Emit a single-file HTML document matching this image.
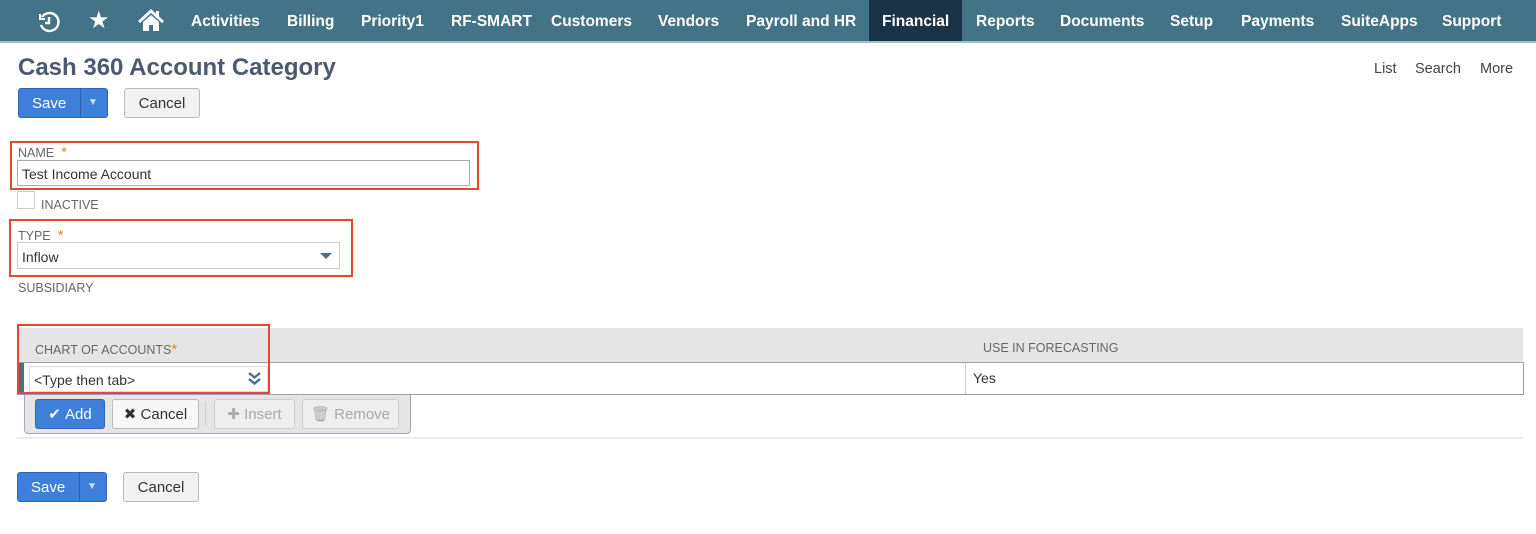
<!DOCTYPE html>
<html><head><meta charset="utf-8"><style>
*{margin:0;padding:0;box-sizing:border-box}
body{width:1536px;height:534px;background:#fff;font-family:"Liberation Sans",sans-serif;position:relative;overflow:hidden;color:#333}
.a{position:absolute;white-space:nowrap}
.nav{position:absolute;left:0;top:0;width:1536px;height:43px;background:#437386;border-bottom:2px solid #9fc0cc}
.ni{position:absolute;top:13px;color:#fff;font-weight:bold;font-size:15.5px}
.lbl{font-size:12.5px;color:#666}
.star{color:#e08a2c;font-size:15px}
.btn{position:absolute;border-radius:3px;font-size:15px;display:flex;align-items:center;justify-content:center}
.save{background:#3f7fdc;border:1px solid #2e66b8;color:#fff}
.cancel{background:#f1f1f1;border:1px solid #bbb;color:#333}
.red{position:absolute;border:2px solid #e8462f}
</style></head><body>
<div class="nav">
<div class="a" style="left:869px;top:0;width:93px;height:41px;background:#1b3346"></div>
<svg class="a" style="left:37px;top:10px" width="24" height="24" viewBox="0 0 24 24" fill="none" stroke="#fff" stroke-width="2.4"><path d="M5 7A9 9 0 1 1 4 15"/><path d="M3 4v5h5" stroke-width="2"/><path d="M12 7v6h-4"/></svg>
<div class="a" style="left:88px;top:6px;color:#fff;font-size:24px">★</div>
<svg class="a" style="left:138px;top:8px" width="26" height="24" viewBox="0 0 26 24" fill="#fff"><path d="M13 1L0 13l2 2 11-10 11 10 2-2-5-4.6V3h-3v2.6z"/><path d="M5 14l8-7 8 7v9h-6v-6h-4v6H5z"/></svg>
<div class="ni" style="left:191px">Activities</div>
<div class="ni" style="left:287px">Billing</div>
<div class="ni" style="left:361px">Priority1</div>
<div class="ni" style="left:451px">RF-SMART</div>
<div class="ni" style="left:551px">Customers</div>
<div class="ni" style="left:658px">Vendors</div>
<div class="ni" style="left:746px">Payroll and HR</div>
<div class="ni" style="left:882px">Financial</div>
<div class="ni" style="left:976px">Reports</div>
<div class="ni" style="left:1060px">Documents</div>
<div class="ni" style="left:1170px">Setup</div>
<div class="ni" style="left:1241px">Payments</div>
<div class="ni" style="left:1341px">SuiteApps</div>
<div class="ni" style="left:1442px">Support</div>
</div>
<div class="a" style="left:18px;top:54px;font-size:24px;font-weight:bold;color:#4d5a6e">Cash 360 Account Category</div>
<div class="a" style="left:1374px;top:61px;font-size:14.5px;color:#444">List</div>
<div class="a" style="left:1415px;top:61px;font-size:14.5px;color:#444">Search</div>
<div class="a" style="left:1480px;top:61px;font-size:14.5px;color:#444">More</div>

<div class="btn save" style="left:18px;top:88px;width:90px;height:30px"><span class="a" style="left:13px;top:6px">Save</span><span class="a" style="left:61px;top:0;width:1px;height:28px;background:#2e5fa8"></span><span class="a" style="left:69px;top:8px;font-size:10px;color:#cfe0f8">▼</span></div>
<div class="btn cancel" style="left:124px;top:88px;width:76px;height:30px">Cancel</div>

<div class="red" style="left:10px;top:141px;width:469px;height:49px"></div>
<div class="a lbl" style="left:18px;top:144px">NAME &nbsp;<span class="star">*</span></div>
<div class="a" style="left:17px;top:160px;width:453px;height:26px;border:1px solid #aaa;font-size:14px;padding:5px 4px">Test Income Account</div>
<div class="a" style="left:17px;top:191px;width:18px;height:18px;border:1px solid #ccc"></div>
<div class="a lbl" style="left:41px;top:198px">INACTIVE</div>

<div class="red" style="left:9px;top:219px;width:344px;height:58px"></div>
<div class="a lbl" style="left:18px;top:227px">TYPE &nbsp;<span class="star">*</span></div>
<div class="a" style="left:17px;top:242px;width:323px;height:27px;border:1px solid #ccc;font-size:14px;padding:6px 4px">Inflow</div>
<div class="a" style="left:320px;top:253px;width:0;height:0;border-left:6px solid transparent;border-right:6px solid transparent;border-top:6px solid #4d6e88"></div>
<div class="a lbl" style="left:18px;top:281px">SUBSIDIARY</div>

<div class="a" style="left:17px;top:328px;width:1506px;height:34px;background:#e5e5e5"></div>
<div class="a lbl" style="left:35px;top:341px">CHART OF ACCOUNTS<span class="star">*</span></div>
<div class="a lbl" style="left:983px;top:341px">USE IN FORECASTING</div>
<div class="a" style="left:17px;top:362px;width:1507px;height:33px;border:1px solid #8fa3b5;background:#fff"></div>
<div class="a" style="left:19px;top:363px;width:5px;height:31px;background:#4e6e86"></div>
<div class="a" style="left:965px;top:363px;width:1px;height:31px;background:#ccc"></div>
<div class="a" style="left:973px;top:370px;font-size:14px">Yes</div>
<div class="a" style="left:29px;top:366px;width:239px;height:26px;border:1px solid #ddd;font-size:14px;padding:5px 4px">&lt;Type then tab&gt;</div>
<svg class="a" style="left:248px;top:372px" width="13" height="13" viewBox="0 0 13 13" fill="none" stroke="#4d6e88" stroke-width="2.4"><path d="M1 1l5.5 4.5L12 1M1 7l5.5 4.5L12 7"/></svg>
<div class="red" style="left:17px;top:324px;width:253px;height:70px"></div>
<div class="a" style="left:17px;top:437px;width:1506px;height:2px;background:#eee"></div>

<div class="a" style="left:24px;top:395px;width:387px;height:39px;background:#e5e5e5;border:1px solid #9aaabb;border-top:none;border-radius:0 0 4px 4px"></div>
<div class="btn save" style="left:35px;top:399px;width:70px;height:30px">✔&nbsp;Add</div>
<div class="btn cancel" style="left:112px;top:399px;width:87px;height:30px;background:#f7f7f7">✖&nbsp;Cancel</div>
<div class="a" style="left:205px;top:402px;width:1px;height:24px;background:#ccc"></div>
<div class="btn cancel" style="left:214px;top:399px;width:81px;height:30px;color:#aaa;background:#eee;border-color:#ccc">✚&nbsp;Insert</div>
<div class="btn cancel" style="left:302px;top:399px;width:97px;height:30px;color:#aaa;background:#eee;border-color:#ccc">🗑&nbsp;Remove</div>

<div class="btn save" style="left:17px;top:472px;width:90px;height:30px"><span class="a" style="left:13px;top:6px">Save</span><span class="a" style="left:61px;top:0;width:1px;height:28px;background:#2e5fa8"></span><span class="a" style="left:69px;top:8px;font-size:10px;color:#cfe0f8">▼</span></div>
<div class="btn cancel" style="left:123px;top:472px;width:76px;height:30px">Cancel</div>
</body></html>
